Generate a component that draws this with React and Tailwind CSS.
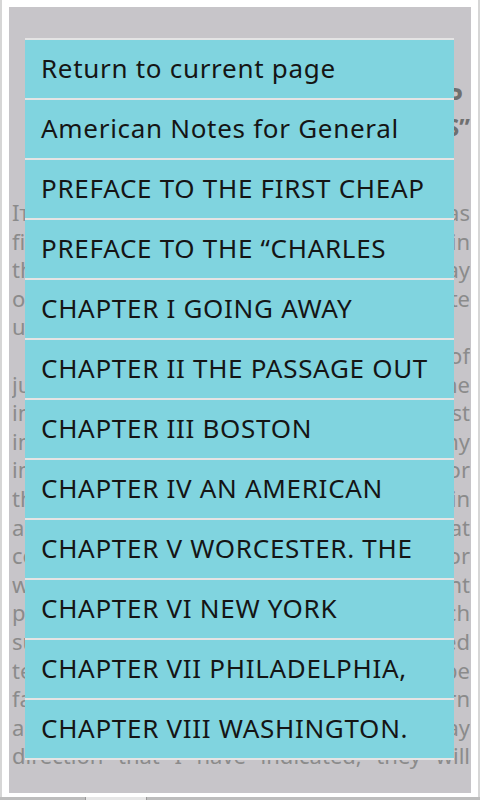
import React from "react";

const items = [
  "Return to current page",
  "American Notes for General",
  "PREFACE TO THE FIRST CHEAP",
  "PREFACE TO THE “CHARLES",
  "CHAPTER I GOING AWAY",
  "CHAPTER II THE PASSAGE OUT",
  "CHAPTER III BOSTON",
  "CHAPTER IV AN AMERICAN",
  "CHAPTER V WORCESTER. THE",
  "CHAPTER VI NEW YORK",
  "CHAPTER VII PHILADELPHIA,",
  "CHAPTER VIII WASHINGTON.",
];

const para1 = [
  "first published. I present it, unaltered, in",
  "the Cheap Edition; such of them as may",
  "opportunities of judging will note",
];
const para1Last = "upon the fairness of the reasoning.";
const para2First = "My readers have opportunities of";
const para2 = [
  "judging for themselves whether the",
  "influences and tendencies which I distrust",
  "in America, have any existence but in my",
  "in the public career of that country, or",
  "there has been any change since then in",
  "all that concerns its present position at",
  "command of its affairs at home, or",
  "whether those tendencies, now apparent",
  "prove the truth of which",
  "such reasoning as mine was founded",
  "tells them. As they find the fact, they hope",
  "fairly to judge me. If they shall discern",
  "any evidences of wrong-going in any way",
  "direction that I have indicated, they will",
];

function Line({ children }) {
  return (
    <div className="h-[28.6px] leading-[28.6px] overflow-hidden text-justify [text-align-last:justify]">
      {children}
    </div>
  );
}

export default function App() {
  return (
    <div
      className="w-[480px] h-[800px] bg-[#d6d6d6] flex flex-col overflow-hidden"
      style={{ fontFamily: '"Noto Sans", "Open Sans", sans-serif' }}
    >
      <div className="mx-[2px] flex-1 bg-white pt-[7px] pb-[4px] px-[7px] flex">
        <div className="relative flex-1 bg-[#c7c5c9] overflow-hidden">
          {/* dimmed page text behind the dialog */}
          <div className="pl-[3px] pr-[1px] pt-[76px] flex flex-col">
            <div className="text-[26px] font-bold text-[#6f6f6f] text-right">
              <div className="h-[29px] leading-[29px] pr-[7px] whitespace-nowrap">THE FIRST CHEAP</div>
              <div className="h-[29px] leading-[29px] whitespace-nowrap text-[24px]">“CHARLES DICKENS”</div>
            </div>
            <div className="mt-[57px] text-[22px] text-[#8b8b8b]">
              <Line>
                I<span className="text-[17px]">T IS</span> nearly eight years since this book was
              </Line>
              {para1.map((t, i) => (
                <Line key={i}>{t}</Line>
              ))}
              <div className="h-[28.6px] leading-[28.6px] overflow-hidden">{para1Last}</div>
              <div className="h-[28.6px] leading-[28.6px] overflow-hidden pl-[40px] text-justify [text-align-last:justify]">
                {para2First}
              </div>
              {para2.map((t, i) => (
                <Line key={i}>{t}</Line>
              ))}
            </div>
          </div>

          {/* dialog list overlay */}
          <div className="absolute left-[16px] top-[31px] w-[429px] flex flex-col bg-[#e4e4e4] pb-[2px]">
            {items.map((t) => (
              <div key={t} className="pt-[2px]">
                <div className="h-[58px] bg-[#80d4df] flex items-center pl-[16px] pb-[1px] text-[26px] tracking-[0.7px] text-[#151515] whitespace-nowrap overflow-hidden">
                  {t}
                </div>
              </div>
            ))}
          </div>
        </div>
      </div>
      <div className="h-[3px] bg-[#bdbdbd] flex">
        <div className="ml-[85px] w-[62px] bg-[#e6e6e6] border-x border-[#9a9a9a]" />
      </div>
    </div>
  );
}
